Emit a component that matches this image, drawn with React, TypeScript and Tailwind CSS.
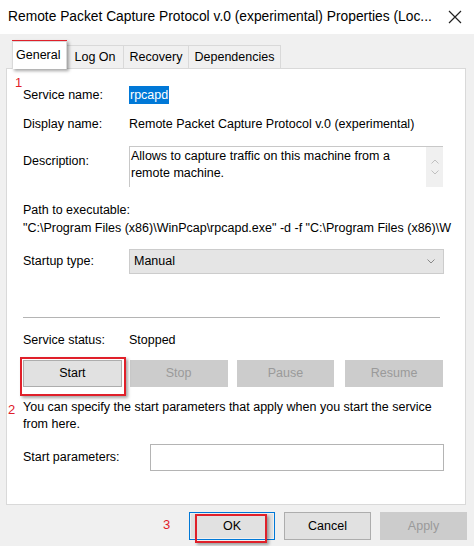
import React from "react";

const font = { fontFamily: '"Liberation Sans", Arial, sans-serif' };

function Btn({ children, disabled, className = "" }: { children: React.ReactNode; disabled?: boolean; className?: string }) {
  return (
    <div
      className={
        "flex items-center justify-center h-[27px] text-[12.5px] border " +
        (disabled ? "bg-[#cccccc] border-[#cccccc] text-[#9a9a9a] " : "bg-[#e1e1e1] border-[#adadad] text-black ") +
        className
      }
    >
      {children}
    </div>
  );
}

export default function App() {
  return (
    <div className="relative w-[474px] h-[546px] bg-[#f0f0f0] overflow-hidden text-black" style={font}>
      {/* Title bar */}
      <div className="h-[34px] bg-white flex items-center justify-between pl-[8px] pr-[12px]">
        <span className="text-[13.8px] whitespace-nowrap">Remote Packet Capture Protocol v.0 (experimental) Properties (Loc...</span>
        <svg width="14" height="14" viewBox="0 0 14 14" className="shrink-0">
          <path d="M1 1 L13 13 M13 1 L1 13" stroke="#222" strokeWidth="1.2" />
        </svg>
      </div>

      {/* Tabs */}
      <div className="flex items-end pl-[12px] h-[34px] text-[12.5px]">
        <div className="h-[28px] w-[55px] bg-white flex items-center pl-[3px] border-t border-l border-r border-[#d9d9d9] relative z-10 -mb-px">General</div>
        <div className="h-[23px] w-[57px] bg-[#f0f0f0] border-t border-r border-[#d9d9d9] flex items-center justify-center">Log On</div>
        <div className="h-[23px] w-[65px] bg-[#f0f0f0] border-t border-r border-[#d9d9d9] flex items-center justify-center">Recovery</div>
        <div className="h-[23px] w-[92px] bg-[#f0f0f0] border-t border-r border-[#d9d9d9] flex items-center justify-center">Dependencies</div>
      </div>

      {/* Panel */}
      <div className="ml-[6px] w-[460px] h-[437px] bg-white border border-[#d9d9d9] pl-[16px] text-[12.5px]">
        <div className="flex items-center h-[18px] mt-[17px]">
          <span className="w-[106px]">Service name:</span>
          <span className="bg-[#0078d7] text-white px-px">rpcapd</span>
        </div>
        <div className="flex items-center h-[18px] mt-[11px]">
          <span className="w-[106px]">Display name:</span>
          <span>Remote Packet Capture Protocol v.0 (experimental)</span>
        </div>
        <div className="flex mt-[13px]">
          <span className="w-[106px] pt-[6px]">Description:</span>
          <div className="w-[314px] h-[41px] border-t border-l border-[#c8c8c8] flex justify-between">
            <div className="w-[275px] pl-[1px] leading-[17px] pt-[1px]">Allows to capture traffic on this machine from a remote machine.</div>
            <div className="w-[17px] bg-[#f0f0f0] flex flex-col items-center justify-center gap-[6px]">
              <svg width="8" height="5" viewBox="0 0 8 5"><path d="M0.5 4.5 L4 1 L7.5 4.5" stroke="#c0c0c0" fill="none" /></svg>
              <svg width="8" height="5" viewBox="0 0 8 5"><path d="M0.5 0.5 L4 4 L7.5 0.5" stroke="#c0c0c0" fill="none" /></svg>
            </div>
          </div>
        </div>
        <div className="flex items-center h-[18px] mt-[14px]">Path to executable:</div>
        <div className="flex items-center h-[18px] whitespace-nowrap">
          "C:\Program Files (x86)\WinPcap\rpcapd.exe" -d -f "C:\Program Files (x86)\W
        </div>
        <div className="flex items-center mt-[12px]">
          <span className="w-[106px]">Startup type:</span>
          <div className="w-[315px] h-[25px] bg-[#e5e5e5] border border-[#cccccc] flex items-center justify-between pl-[4px] pr-[8px]">
            <span>Manual</span>
            <svg width="8" height="5" viewBox="0 0 8 5"><path d="M0.5 0.5 L4 4 L7.5 0.5" stroke="#888" fill="none" /></svg>
          </div>
        </div>
        <div className="w-[417px] h-px bg-[#b4b4b4] mt-[43px]" />
        <div className="flex items-center h-[18px] mt-[13px]">
          <span className="w-[106px]">Service status:</span>
          <span>Stopped</span>
        </div>
        <div className="flex mt-[11px] w-[420px] gap-[7px]">
          <Btn className="w-[99px] mr-[1px]">Start</Btn>
          <Btn disabled className="w-[98px]">Stop</Btn>
          <Btn disabled className="w-[98px] ml-[2px]">Pause</Btn>
          <Btn disabled className="w-[98px] ml-[4px]">Resume</Btn>
        </div>
        <div className="mt-[12px] leading-[17px] w-[418px]">
          You can specify the start parameters that apply when you start the service from here.
        </div>
        <div className="flex items-center mt-[11px]">
          <span className="w-[127px]">Start parameters:</span>
          <div className="w-[294px] h-[27px] border border-[#b4b4b4] bg-white" />
        </div>
      </div>

      {/* Footer */}
      <div className="flex justify-end gap-[9px] pr-[7px] mt-[7px] text-[12.5px]">
        <div className="w-[86px] h-[28px] border border-[#0078d7] p-px">
          <div className="w-full h-full bg-[#e1e1e1] flex items-center justify-center">OK</div>
        </div>
        <div className="w-[87px] h-[28px] bg-[#e1e1e1] border border-[#adadad] flex items-center justify-center">Cancel</div>
        <div className="w-[87px] h-[28px] bg-[#cccccc] border border-[#cccccc] text-[#9a9a9a] flex items-center justify-center">Apply</div>
      </div>

      {/* Annotations */}
      <div className="absolute left-[12px] top-[40px] w-[55px] h-[29px] border-2 border-[#e0202a] shadow-[2px_2px_3px_rgba(0,0,0,0.35)]" />
      <span className="absolute left-[15px] top-[73px] text-[13px] text-[#e0202a]">1</span>
      <div className="absolute left-[20px] top-[357px] w-[106px] h-[39px] border-2 border-[#e0202a] shadow-[2px_2px_3px_rgba(0,0,0,0.35)]" />
      <span className="absolute left-[8px] top-[400px] text-[13px] text-[#e0202a]">2</span>
      <div className="absolute left-[195px] top-[514px] w-[72px] h-[29px] border-2 border-[#e0202a] shadow-[2px_2px_3px_rgba(0,0,0,0.35)]" />
      <span className="absolute left-[163px] top-[515px] text-[13px] text-[#e0202a]">3</span>
    </div>
  );
}
